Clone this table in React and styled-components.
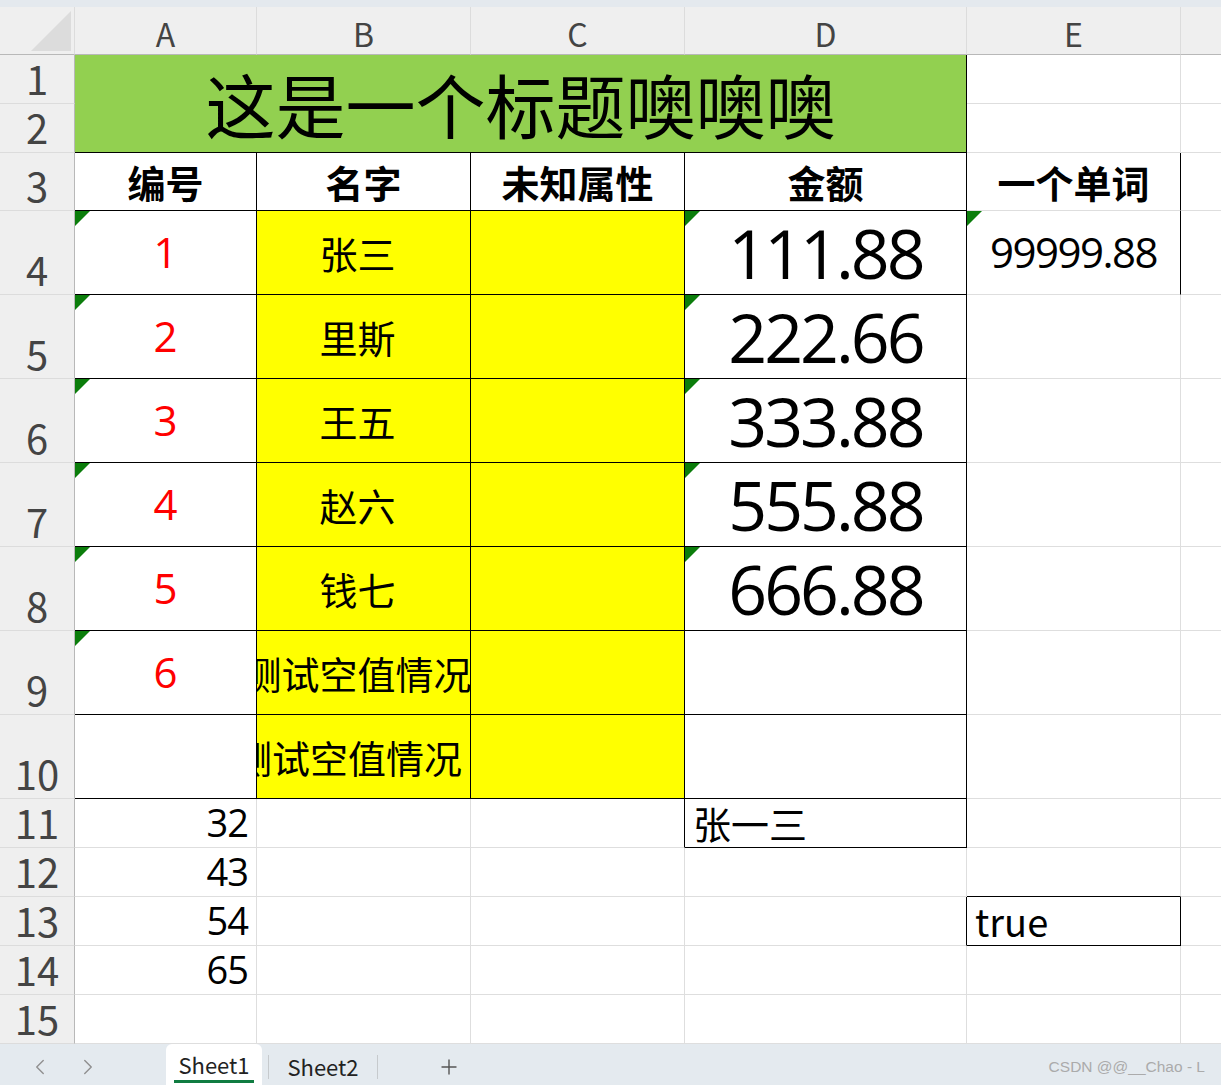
import React from 'react';
import styled, { createGlobalStyle } from 'styled-components';
import { ChevronLeft, ChevronRight, Plus } from 'lucide-react';

const CJK = '"Noto Sans CJK SC", "Noto Sans", sans-serif';
const NUM = '"Open Sans", "Noto Sans CJK SC", sans-serif';
const GRID = '#dedede';

const GlobalStyle = createGlobalStyle`
  html, body {
    margin: 0;
    padding: 0;
    background: #fff;
  }
  body {
    font-family: ${CJK};
  }
  * {
    box-sizing: border-box;
  }
`;

const Page = styled.div`
  width: 1221px;
  height: 1085px;
  display: flex;
  flex-direction: column;
  overflow: hidden;
  background: #fff;
`;

const TopStrip = styled.div`
  flex: none;
  height: 7px;
  background: #e4e9ee;
`;

const Sheet = styled.div`
  flex: none;
  display: grid;
  grid-template-columns: 75px 182px 214px 214px 282px 214px 60px;
  grid-template-rows: 48px 49px 49px 58px repeat(7, 84px) repeat(5, 49px);
`;

const Corner = styled.div`
  display: flex;
  justify-content: flex-end;
  align-items: flex-end;
  padding: 0 3px 3px 0;
  background: #efefef;
  border-right: 1px solid #dcdcdc;
  border-bottom: 1px solid #b8b8b8;
`;

const CornerMark = styled.div`
  width: 40px;
  height: 40px;
  background: #dcdcdc;
  clip-path: polygon(100% 0, 100% 100%, 0 100%);
`;

const ColHead = styled.div`
  display: flex;
  align-items: center;
  justify-content: center;
  padding-top: 5px;
  background: #efefef;
  color: #444;
  font-family: ${CJK};
  font-size: 32px;
  line-height: 1.2;
  border-right: 1px solid #dcdcdc;
  border-bottom: 1px solid #b8b8b8;
`;

const RowHead = styled.div`
  display: flex;
  align-items: flex-end;
  justify-content: center;
  padding-bottom: 3px;
  background: #efefef;
  color: #444;
  font-family: ${CJK};
  font-size: 40px;
  line-height: 1.1;
  border-right: 1px solid #b8b8b8;
  border-bottom: 1px solid #dcdcdc;
`;

const justify = (a) => (a === 'left' ? 'flex-start' : a === 'right' ? 'flex-end' : 'center');

const Cell = styled.div`
  position: relative;
  display: flex;
  align-items: center;
  justify-content: ${(p) => justify(p.$align)};
  padding: 0 ${(p) => p.$padR || 8}px 0 8px;
  overflow: ${(p) => (p.$clip ? 'hidden' : 'visible')};
  white-space: nowrap;
  background: ${(p) => p.$bg || '#fff'};
  color: ${(p) => p.$color || '#000'};
  font-family: ${(p) => (p.$num ? NUM : CJK)};
  font-size: ${(p) => p.$size || 38}px;
  font-weight: ${(p) => (p.$bold ? 700 : 400)};
  letter-spacing: ${(p) => p.$track || 0}px;
  line-height: 1.2;
  border-right: 1px solid ${(p) => (p.$r ? '#000' : GRID)};
  border-bottom: 1px solid ${(p) => (p.$b ? '#000' : GRID)};
  grid-column: ${(p) => (p.$cols ? `span ${p.$cols}` : 'auto')};
  grid-row: ${(p) => (p.$rows ? `span ${p.$rows}` : 'auto')};
`;

// little green "number stored as text" marker
const Flag = styled.span`
  position: absolute;
  top: 0;
  left: 0;
  width: 15px;
  height: 15px;
  background: #0b7d0b;
  clip-path: polygon(0 0, 100% 0, 0 100%);
`;

const TabBar = styled.div`
  flex: 1;
  display: flex;
  align-items: stretch;
  background: #e4eaef;
  font-family: ${CJK};
`;

const NavGroup = styled.div`
  width: 166px;
  display: flex;
  align-items: center;
  gap: 22px;
  padding: 4px 0 0 27px;
  color: #8f8f8f;
`;

const Tab = styled.div`
  width: ${(p) => p.$w}px;
  display: flex;
  align-items: center;
  justify-content: center;
  background: ${(p) => (p.$active ? '#fff' : 'transparent')};
  border-radius: 6px 6px 0 0;
`;

const TabLabel = styled.span`
  padding: 4px 4px 3px;
  margin-top: ${(p) => (p.$active ? 0 : 4)}px;
  font-size: 22px;
  line-height: 26px;
  color: #222;
  border-bottom: 3px solid ${(p) => (p.$active ? '#107c41' : 'transparent')};
`;

const TabSep = styled.div`
  align-self: center;
  width: 1px;
  height: 24px;
  margin: 4px 0 0 ${(p) => p.$gap || 0}px;
  background: #c6cacd;
`;

const AddTab = styled.div`
  display: flex;
  align-items: center;
  padding-top: 4px;
  margin-left: 59px;
  color: #555;
`;

const Watermark = styled.div`
  margin-left: auto;
  align-self: center;
  padding: 4px 16px 0 0;
  font-family: "Liberation Sans", Arial, sans-serif;
  font-size: 15.5px;
  color: #ababab;
`;

const columns = ['A', 'B', 'C', 'D', 'E', ''];

const people = [
  { no: '1', name: '张三', amt: '111.88' },
  { no: '2', name: '里斯', amt: '222.66' },
  { no: '3', name: '王五', amt: '333.88' },
  { no: '4', name: '赵六', amt: '555.88' },
  { no: '5', name: '钱七', amt: '666.88' },
  { no: '6', name: '测试空值情况', amt: '' },
  { no: '', name: '测试空值情况', amt: '', nameAlign: 'right' },
];

const extras = [
  { n: 11, a: '32', d: '张一三', dBox: true, cRight: true },
  { n: 12, a: '43', eBottom: true },
  { n: 13, a: '54', dRight: true, e: 'true', eBox: true },
  { n: 14, a: '65' },
  { n: 15, a: '' },
];

function TableRow({ n, person, extraE }) {
  const long = person.name.length > 4;
  return (
    <>
      <RowHead>{n}</RowHead>
      <Cell $r $b $num $size={42} $color="#ff0000">
        {person.no && <Flag />}
        {person.no}
      </Cell>
      <Cell
        $r
        $b
        $bg="#ffff00"
        $clip={long}
        $align={person.nameAlign}
        $padR={person.nameAlign ? 8 : 20}
      >
        {person.name}
      </Cell>
      <Cell $r $b $bg="#ffff00" />
      <Cell $r $b $num $size={68} $track={-3}>
        {person.amt && <Flag />}
        {person.amt}
      </Cell>
      {extraE || <Cell />}
      <Cell />
    </>
  );
}

export default function App() {
  return (
    <Page>
      <GlobalStyle />
      <TopStrip />
      <Sheet>
        <Corner>
          <CornerMark />
        </Corner>
        {columns.map((c, i) => (
          <ColHead key={i}>{c}</ColHead>
        ))}

        <RowHead>1</RowHead>
        <Cell $cols={4} $rows={2} $r $b $bg="#92d050" $size={70}>
          这是一个标题噢噢噢
        </Cell>
        <Cell />
        <Cell />
        <RowHead>2</RowHead>
        <Cell />
        <Cell />

        <RowHead>3</RowHead>
        <Cell $r $b $bold>编号</Cell>
        <Cell $r $b $bold>名字</Cell>
        <Cell $r $b $bold>未知属性</Cell>
        <Cell $r $b $bold>金额</Cell>
        <Cell $r $bold>一个单词</Cell>
        <Cell />

        {people.map((p, i) => (
          <TableRow
            key={i}
            n={i + 4}
            person={p}
            extraE={
              i === 0 ? (
                <Cell $r $num $size={42} $track={-1.5}>
                  <Flag />
                  99999.88
                </Cell>
              ) : null
            }
          />
        ))}

        {extras.map((r) => (
          <React.Fragment key={r.n}>
            <RowHead>{r.n}</RowHead>
            <Cell $align="right" $num $track={-1}>
              {r.a}
            </Cell>
            <Cell />
            <Cell $r={r.cRight} />
            <Cell $align="left" $r={r.dBox || r.dRight} $b={r.dBox}>
              {r.d}
            </Cell>
            <Cell $align="left" $r={r.eBox} $b={r.eBox || r.eBottom}>
              {r.e}
            </Cell>
            <Cell />
          </React.Fragment>
        ))}
      </Sheet>

      <TabBar>
        <NavGroup>
          <ChevronLeft size={26} strokeWidth={1.3} />
          <ChevronRight size={26} strokeWidth={1.3} />
        </NavGroup>
        <Tab $w={96} $active>
          <TabLabel $active>Sheet1</TabLabel>
        </Tab>
        <TabSep $gap={6} />
        <Tab $w={108}>
          <TabLabel>Sheet2</TabLabel>
        </Tab>
        <TabSep />
        <AddTab>
          <Plus size={24} strokeWidth={1.4} />
        </AddTab>
        <Watermark>CSDN @@__Chao - L</Watermark>
      </TabBar>
    </Page>
  );
}
